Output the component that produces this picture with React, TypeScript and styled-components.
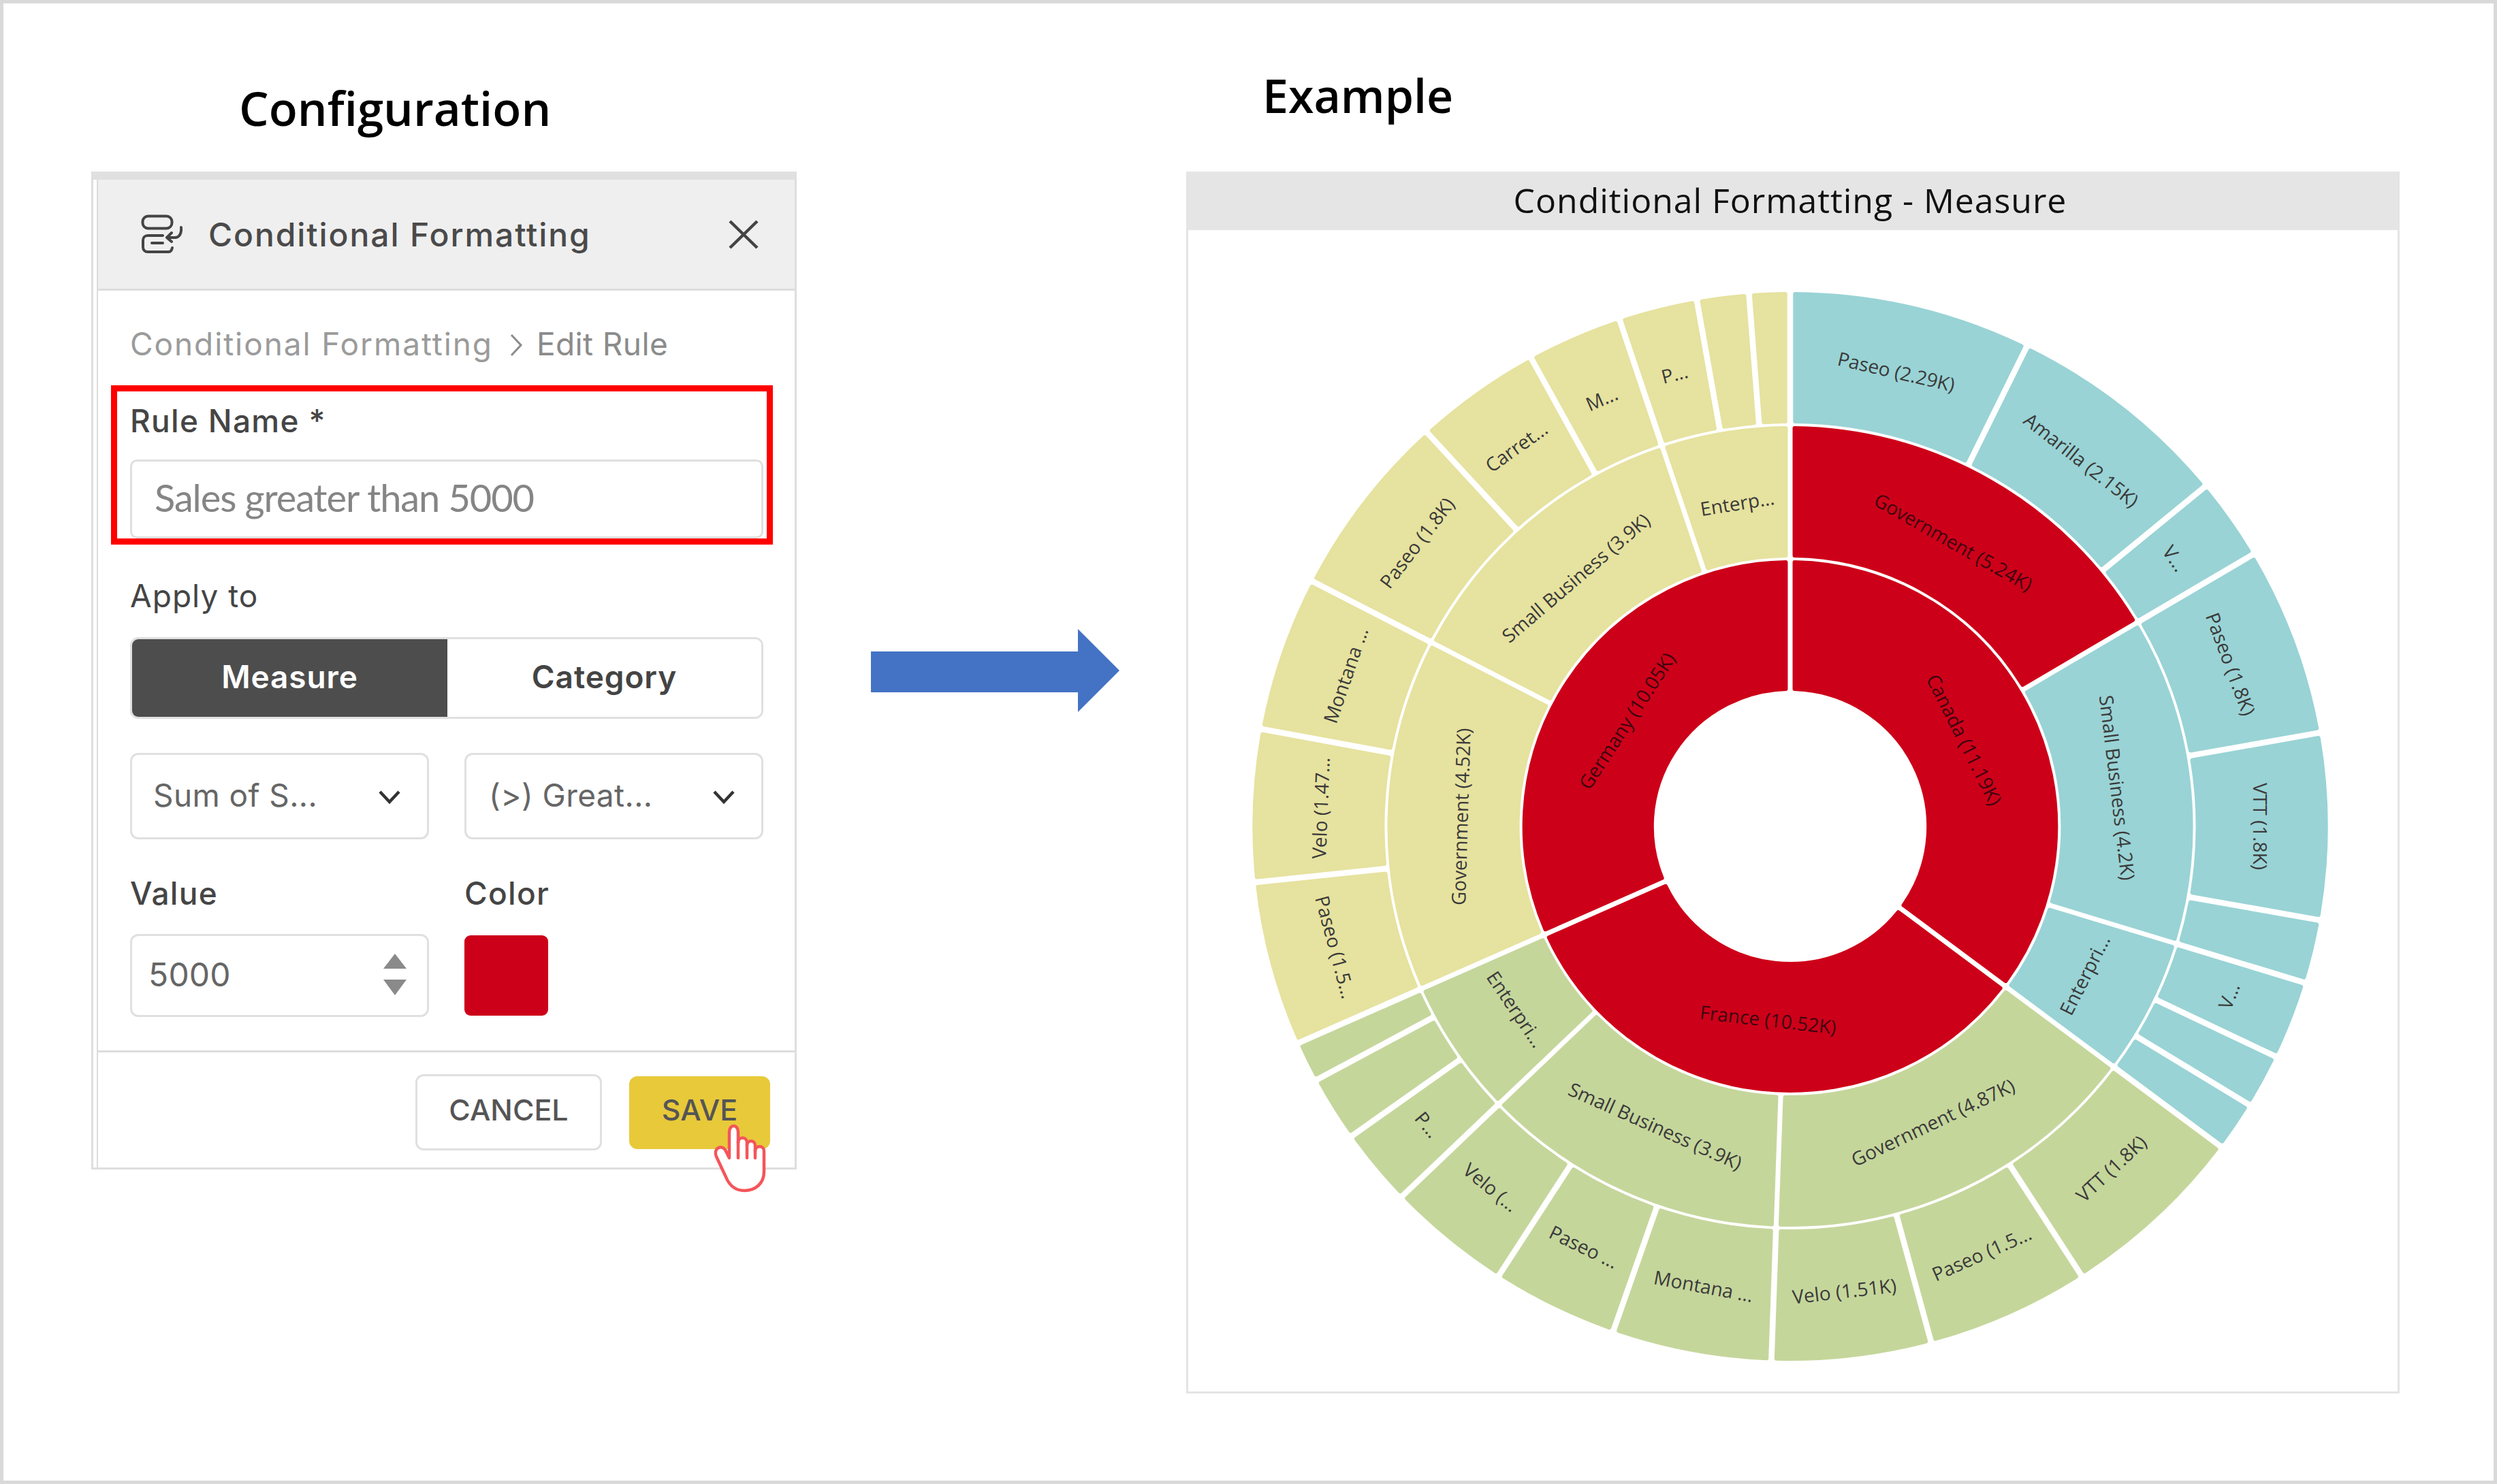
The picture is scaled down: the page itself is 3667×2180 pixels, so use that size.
import React from 'react';
import styled, { createGlobalStyle } from 'styled-components';

const GlobalStyle = createGlobalStyle`
  html, body {
    margin: 0;
    padding: 0;
    background: #fff;
  }
`;

const RED = '#cd0019';
const TEAL = '#99d3d5';
const GREEN = '#c5d69b';
const YELLOW = '#e6e29f';

interface Slice {
  label?: string;
  from: number;
  to: number;
  color: string;
  level: number;
}

const RINGS = [
  { inner: 199, outer: 391, gap: 7, labelShift: -10 },
  { inner: 395, outer: 588, gap: 7, labelShift: -10 },
  { inner: 592, outer: 785, gap: 8.5, labelShift: -2 }
];

const CX = 884;
const CY = 876;
const CORNER = 3;

// [label, end angle] per level, walked clockwise from the top
type Leaf = [string | undefined, number];
type Branch = { label: string; to: number; color?: string; leaves: Leaf[] };
type Root = { label: string; to: number; color: string; branches: Branch[] };

const TREE: Root[] = [
  {
    label: 'Canada (11.19K)', to: 126.8, color: TEAL,
    branches: [
      { label: 'Government (5.24K)', to: 59.4, color: RED, leaves: [['Paseo (2.29K)', 26.1], ['Amarilla (2.15K)', 50.5], ['V...', 59.4]] },
      { label: 'Small Business (4.2K)', to: 107, leaves: [['Paseo (1.8K)', 79.9], ['VTT (1.8K)', 100.1], [undefined, 107]] },
      { label: 'Enterpri...', to: 126.8, leaves: [['V...', 115.5], [undefined, 121.4], [undefined, 126.8]] }
    ]
  },
  {
    label: 'France (10.52K)', to: 246.1, color: GREEN,
    branches: [
      { label: 'Government (4.87K)', to: 182, leaves: [['VTT (1.8K)', 147.2], ['Paseo (1.5...', 164.8], ['Velo (1.51K)', 182]] },
      { label: 'Small Business (3.9K)', to: 226.2, leaves: [['Montana ...', 199.2], ['Paseo ...', 212.8], ['Velo (...', 226.2]] },
      { label: 'Enterpri...', to: 246.1, leaves: [['P...', 234.6], [undefined, 241.7], [undefined, 246.1]] }
    ]
  },
  {
    label: 'Germany (10.05K)', to: 360, color: YELLOW,
    branches: [
      { label: 'Government (4.52K)', to: 297.3, leaves: [['Paseo (1.5...', 264], ['Velo (1.47...', 280.5], ['Montana ...', 297.3]] },
      { label: 'Small Business (3.9K)', to: 341.5, leaves: [['Paseo (1.8K)', 317.5], ['Carret...', 331.2], ['M...', 341.5]] },
      { label: 'Enterp...', to: 360, leaves: [['P...', 350], [undefined, 355.6], [undefined, 360]] }
    ]
  }
];

function flatten (): Slice[] {
  const slices: Slice[] = [];
  let rootFrom = 0;

  TREE.forEach((root) => {
    slices.push({ label: root.label, from: rootFrom, to: root.to, color: RED, level: 0 });
    let branchFrom = rootFrom;

    root.branches.forEach((branch) => {
      slices.push({ label: branch.label, from: branchFrom, to: branch.to, color: branch.color || root.color, level: 1 });
      let leafFrom = branchFrom;

      branch.leaves.forEach(([label, to]) => {
        slices.push({ label, from: leafFrom, to, color: root.color, level: 2 });
        leafFrom = to;
      });
      branchFrom = branch.to;
    });
    rootFrom = root.to;
  });

  return slices;
}

function polar (angle: number, r: number): string {
  const rad = angle * Math.PI / 180;

  return `${(CX + r * Math.sin(rad)).toFixed(2)} ${(CY - r * Math.cos(rad)).toFixed(2)}`;
}

function slicePath ({ from, level, to }: Slice): string {
  const { gap, inner, outer } = RINGS[level];
  const r0 = inner + CORNER;
  const r1 = outer - CORNER;
  const off = (r: number) => Math.asin((gap / 2 + CORNER) / r) * 180 / Math.PI;
  const large = to - from > 180 ? 1 : 0;

  return [
    `M ${polar(from + off(r1), r1)}`,
    `A ${r1} ${r1} 0 ${large} 1 ${polar(to - off(r1), r1)}`,
    `L ${polar(to - off(r0), r0)}`,
    `A ${r0} ${r0} 0 ${large} 0 ${polar(from + off(r0), r0)}`,
    'Z'
  ].join(' ');
}

function labelTransform ({ from, level, to }: Slice): string {
  const mid = (from + to) / 2;
  const ring = RINGS[level];
  const r = (ring.inner + ring.outer) / 2 + ring.labelShift;
  const rad = mid * Math.PI / 180;
  const x = CX + r * Math.sin(rad);
  const y = CY - r * Math.cos(rad);
  let rotate = mid;

  if (mid > 270) {
    rotate = mid - 360;
  } else if (mid > 90.5) {
    rotate = mid - 180;
  }

  return `translate(${x.toFixed(2)} ${y.toFixed(2)}) rotate(${rotate.toFixed(2)})`;
}

const Frame = styled.div`
  box-sizing: border-box;
  display: flex;
  align-items: flex-start;
  width: 3667px;
  height: 2180px;
  padding-left: 129px;
  border: 5px solid #d9d9d9;
  background: #fff;
  overflow: hidden;
`;

const ConfigColumn = styled.section`
  flex: none;
  width: 1036px;
  padding-top: 103px;
`;

const Heading = styled.h2<{ $indent: number; $gap: number; $size: number; $top?: number }>`
  margin: ${({ $top }) => $top ?? 0}px 0 ${({ $gap }) => $gap}px ${({ $indent }) => $indent}px;
  font-family: "Open Sans", sans-serif;
  font-size: ${({ $size }) => $size}px;
  font-weight: 600;
  line-height: 100px;
  color: #000;
`;

const Panel = styled.div`
  box-sizing: border-box;
  display: flex;
  height: 1466px;
  border: 3px solid #dedede;
  border-top-width: 12px;
  border-top-color: #e0e0e0;
  background: #fff;
  font-family: Inter, sans-serif;
  color: #444;
`;

const PanelInner = styled.div`
  flex: 1;
  min-width: 0;
  margin-left: 5px;
  border-left: 2px solid #dcdcdc;
`;

const PanelHeader = styled.header`
  box-sizing: border-box;
  display: flex;
  align-items: center;
  height: 163px;
  padding: 0 53px 0 62px;
  border-bottom: 3px solid #dddddd;
  background: #efefef;
`;

const PanelTitle = styled.span`
  flex: 1;
  margin-left: 38px;
  font-size: 48px;
  font-weight: 500;
  letter-spacing: 1.9px;
  color: #4a4a4a;
`;

const PanelBody = styled.div`
  padding: 48px 46px 49px 47px;
`;

const Crumbs = styled.div`
  display: flex;
  align-items: center;
  height: 60px;
  font-size: 46px;
  letter-spacing: 1.9px;
  color: #9b9b9b;
`;

const CrumbSeparator = styled.svg`
  width: 20px;
  height: 34px;
  margin: 4px 20px 0 24px;
`;

const CrumbCurrent = styled.span`
  letter-spacing: 0.4px;
  color: #8b8b8b;
`;

const RuleBox = styled.div`
  box-sizing: border-box;
  height: 234px;
  margin: 31px -14px 0 -28px;
  padding: 13px 5px 0 19px;
  border: 9px solid #ff0000;
`;

const FieldLabel = styled.div<{ $after?: number }>`
  height: 60px;
  margin-bottom: ${({ $after }) => $after ?? 30}px;
  font-size: 46px;
  font-weight: 500;
  line-height: 60px;
  letter-spacing: 1.3px;
  color: #454545;
`;

const NameInput = styled.input`
  box-sizing: border-box;
  display: block;
  width: 100%;
  height: 116px;
  padding: 0 0 5px 33px;
  border: 3px solid #dfdfdf;
  border-radius: 10px;
  outline: none;
  background: #fff;
  font-family: Lato, sans-serif;
  font-size: 56px;
  letter-spacing: -1.1px;

  &::placeholder {
    color: #858585;
    opacity: 1;
  }
`;

const ApplyLabel = styled(FieldLabel)`
  margin-top: 45px;
  font-weight: 400;
  letter-spacing: 1px;
`;

const Toggle = styled.div`
  box-sizing: border-box;
  display: grid;
  grid-template-columns: 463px 1fr;
  height: 120px;
  border: 3px solid #e0e0e0;
  border-radius: 12px;
  overflow: hidden;
`;

const ToggleOption = styled.div<{ $active?: boolean }>`
  display: flex;
  align-items: center;
  justify-content: center;
  padding-bottom: 5px;
  background: ${({ $active }) => ($active ? '#4d4d4d' : '#fff')};
  font-size: 46px;
  font-weight: 600;
  letter-spacing: 0.9px;
  color: ${({ $active }) => ($active ? '#fff' : '#444')};
`;

const TwoColumns = styled.div<{ $top: number }>`
  display: grid;
  grid-template-columns: 1fr 1fr;
  column-gap: 52px;
  margin-top: ${({ $top }) => $top}px;
`;

const Control = styled.div<{ $height: number; $inset: number }>`
  box-sizing: border-box;
  display: flex;
  align-items: center;
  justify-content: space-between;
  height: ${({ $height }) => $height}px;
  padding: 0 38px 3px ${({ $inset }) => $inset}px;
  border: 3px solid #e0e0e0;
  border-radius: 12px;
  font-size: 46px;
  letter-spacing: 0.4px;
  color: #666;
`;

const ValueText = styled.span`
  font-size: 48px;
  letter-spacing: 0.2px;
`;

const Chevron = styled.svg`
  width: 34px;
  height: 22px;
  margin-top: 6px;
`;

const SpinStack = styled.div`
  display: flex;
  flex-direction: column;
  gap: 16px;
  margin-right: -8px;
`;

const SpinArrow = styled.div<{ $down?: boolean }>`
  width: 0;
  height: 0;
  border-left: 17px solid transparent;
  border-right: 17px solid transparent;
  ${({ $down }) => ($down ? 'border-top: 23px solid #8a8a8a;' : 'border-bottom: 22px solid #8a8a8a;')}
`;

const Swatch = styled.div`
  width: 123px;
  height: 118px;
  margin-top: 2px;
  border-radius: 9px;
  background: ${RED};
`;

const PanelFooter = styled.footer`
  display: flex;
  justify-content: flex-end;
  align-items: center;
  gap: 40px;
  padding: 32px 36px 0 0;
  border-top: 3px solid #dddddd;
`;

const FooterButton = styled.button<{ $primary?: boolean }>`
  position: relative;
  box-sizing: border-box;
  width: ${({ $primary }) => ($primary ? 207 : 274)}px;
  height: ${({ $primary }) => ($primary ? 107 : 112)}px;
  padding: 0 0 9px;
  border: ${({ $primary }) => ($primary ? 'none' : '3px solid #e0e0e0')};
  border-radius: 12px;
  background: ${({ $primary }) => ($primary ? '#e8c93a' : '#fff')};
  font-family: Inter, sans-serif;
  font-size: 43px;
  font-weight: 500;
  color: #555;
`;

const HandCursor = styled.svg`
  position: absolute;
  left: 105px;
  top: 60px;
  width: 110px;
  height: 120px;
`;

const ArrowShape = styled.svg`
  flex: none;
  width: 365px;
  height: 122px;
  margin: 919px 98px 0 109px;
`;

const ExampleColumn = styled.section`
  flex: none;
  width: 1782px;
  padding-top: 83px;
`;

const ChartCard = styled.div`
  box-sizing: border-box;
  height: 1795px;
  border: 3px solid #e4e4e4;
  border-top: none;
  background: #fff;
`;

const ChartTitle = styled.div`
  height: 86px;
  padding-right: 8px;
  background: #e5e5e5;
  font-family: "Open Sans", sans-serif;
  font-size: 50px;
  letter-spacing: 0.95px;
  line-height: 84px;
  text-align: center;
  color: #111;
`;

const Sunburst = styled.svg`
  display: block;
  width: 1776px;
  height: 1706px;
`;

const SliceLabel = styled.text<{ $onRed: boolean }>`
  font-family: "Open Sans", sans-serif;
  font-size: 28px;
  text-anchor: middle;
  dominant-baseline: central;
  fill: ${({ $onRed }) => ($onRed ? '#3d0410' : '#3a3a3a')};
`;

function App (): React.ReactElement {
  const slices = flatten();

  return (
    <Frame>
      <GlobalStyle />
      <ConfigColumn>
        <Heading $gap={44} $indent={217} $size={69}>Configuration</Heading>
        <Panel>
          <PanelInner>
            <PanelHeader>
              <svg fill='none' height='60' stroke='#444' strokeLinecap='round' strokeLinejoin='round' strokeWidth='4' viewBox='15 15 62 60' width='62'>
                <rect height='18' rx='8' width='43' x='18.5' y='18.5' />
                <path d='M48 47H26c-4 0-7 3-7 7v10c0 4 3 7 7 7h31c3 0 4-2 5-6' />
                <path d='M32 58h16' />
                <path d='M75 35c1 9-3 15-9 15H55M61 43l-7 7 7 6' />
              </svg>
              <PanelTitle>Conditional Formatting</PanelTitle>
              <svg fill='none' height='43' stroke='#444' strokeWidth='4.5' viewBox='0 0 44 43' width='44'>
                <path d='M2 2l40 39M42 2L2 41' />
              </svg>
            </PanelHeader>
            <PanelBody>
              <Crumbs>
                Conditional Formatting
                <CrumbSeparator fill='none' stroke='#8b8b8b' strokeWidth='3' viewBox='0 0 20 34'>
                  <path d='M3 2l14 15L3 32' />
                </CrumbSeparator>
                <CrumbCurrent>Edit Rule</CrumbCurrent>
              </Crumbs>
              <RuleBox>
                <FieldLabel $after={27}>Rule Name *</FieldLabel>
                <NameInput placeholder='Sales greater than 5000' readOnly />
              </RuleBox>
              <ApplyLabel $after={31}>Apply to</ApplyLabel>
              <Toggle>
                <ToggleOption $active>Measure</ToggleOption>
                <ToggleOption>Category</ToggleOption>
              </Toggle>
              <TwoColumns $top={50}>
                <Control $height={127} $inset={31}>
                  Sum of S...
                  <Chevron fill='none' stroke='#333' strokeWidth='4.5' viewBox='0 0 34 22'>
                    <path d='M3 3l14 15L31 3' />
                  </Chevron>
                </Control>
                <Control $height={127} $inset={33}>
                  {'(>) Great...'}
                  <Chevron fill='none' stroke='#333' strokeWidth='4.5' viewBox='0 0 34 22'>
                    <path d='M3 3l14 15L31 3' />
                  </Chevron>
                </Control>
              </TwoColumns>
              <TwoColumns $top={49}>
                <FieldLabel>Value</FieldLabel>
                <FieldLabel>Color</FieldLabel>
                <Control $height={122} $inset={24}>
                  <ValueText>5000</ValueText>
                  <SpinStack>
                    <SpinArrow />
                    <SpinArrow $down />
                  </SpinStack>
                </Control>
                <Swatch />
              </TwoColumns>
            </PanelBody>
            <PanelFooter>
              <FooterButton>CANCEL</FooterButton>
              <FooterButton $primary>
                SAVE
                <HandCursor viewBox='0 0 110 120'>
                  <path
                    d='M42 60V22c0-12 13-12 13 0v16c0-10 13-10 13 0v4c0-9 12-9 12 0v8c0-9 13-9 13 0v30c0 18-13 28-29 28-14 0-22-8-27-20L23 58c-5-12 7-18 13-10l6 12z'
                    fill='#fff'
                    stroke='#f4555a'
                    strokeLinejoin='round'
                    strokeWidth='4.5'
                  />
                  <path d='M55 36v24M68 40v20M80 48v12' fill='none' stroke='#f4555a' strokeLinecap='round' strokeWidth='4.5' />
                </HandCursor>
              </FooterButton>
            </PanelFooter>
          </PanelInner>
        </Panel>
      </ConfigColumn>
      <ArrowShape viewBox='0 0 365 122'>
        <polygon fill='#4472c4' points='0,33 304,33 304,0 365,61 304,122 304,93 0,93' />
      </ArrowShape>
      <ExampleColumn>
        <Heading $gap={62} $indent={112} $size={68} $top={2}>Example</Heading>
        <ChartCard>
          <ChartTitle>Conditional Formatting - Measure</ChartTitle>
          <Sunburst viewBox='0 0 1776 1706'>
            {/* the chart in the picture is a touch wider than it is tall */}
            <g transform={`translate(${CX} ${CY}) scale(1.006 1) translate(${-CX} ${-CY})`}>
              {slices.map((slice, index) => (
                <path
                  d={slicePath(slice)}
                  fill={slice.color}
                  key={index}
                  stroke={slice.color}
                  strokeLinejoin='round'
                  strokeWidth={CORNER * 2}
                />
              ))}
              {slices.filter((slice) => slice.label).map((slice, index) => (
                <SliceLabel
                  $onRed={slice.color === RED}
                  key={index}
                  transform={labelTransform(slice)}
                >
                  {slice.label}
                </SliceLabel>
              ))}
            </g>
          </Sunburst>
        </ChartCard>
      </ExampleColumn>
    </Frame>
  );
}

export default App;
